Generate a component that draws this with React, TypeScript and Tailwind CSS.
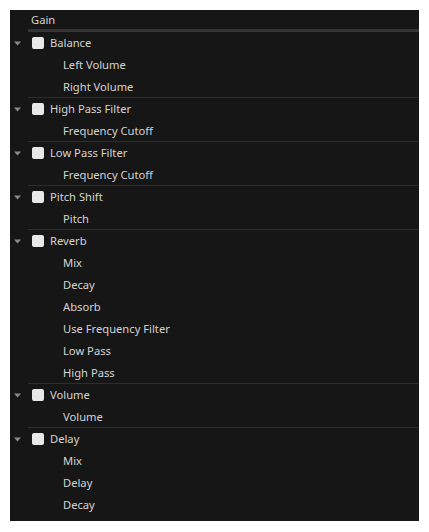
const groups: { title: string; items: string[] }[] = [
  { title: 'Balance', items: ['Left Volume', 'Right Volume'] },
  { title: 'High Pass Filter', items: ['Frequency Cutoff'] },
  { title: 'Low Pass Filter', items: ['Frequency Cutoff'] },
  { title: 'Pitch Shift', items: ['Pitch'] },
  {
    title: 'Reverb',
    items: ['Mix', 'Decay', 'Absorb', 'Use Frequency Filter', 'Low Pass', 'High Pass'],
  },
  { title: 'Volume', items: ['Volume'] },
  { title: 'Delay', items: ['Mix', 'Delay', 'Decay'] },
];

function Caret() {
  return (
    <svg width="7" height="5" viewBox="0 0 7 5" className="fill-[#8a8a8a]">
      <path d="M0 0.5 H7 L3.5 4.5 Z" />
    </svg>
  );
}

export default function App() {
  return (
    <div className="min-h-[532px] w-[429px] bg-white p-[10px] font-['Noto_Sans',sans-serif] text-[11.2px] text-[#d4d4d4]">
      <div className="w-[409px] bg-[#161616] pb-[5px]">
        <div className="flex h-[19px] items-center pl-[21px] leading-none">Gain</div>
        <div className="ml-[18px] h-[3px] bg-[#353535]" />
        {groups.map((g, gi) => (
          <div key={gi}>
            <div className="flex h-[22px] items-center">
              <div className="flex w-[22px] pl-[4px]">
                <Caret />
              </div>
              <span className="h-[12px] w-[12px] rounded-[2px] bg-[#e8e8e8]" />
              <span className="ml-[6px] leading-none">{g.title}</span>
            </div>
            {g.items.map((item, i) => (
              <div
                key={i}
                className={
                  i === g.items.length - 1 && gi !== groups.length - 1
                    ? 'ml-[18px] flex h-[22px] items-center border-b border-[#2d2d2d] pl-[35px]'
                    : 'ml-[18px] flex h-[22px] items-center pl-[35px]'
                }
              >
                <span className="leading-none">{item}</span>
              </div>
            ))}
          </div>
        ))}
      </div>
    </div>
  );
}
